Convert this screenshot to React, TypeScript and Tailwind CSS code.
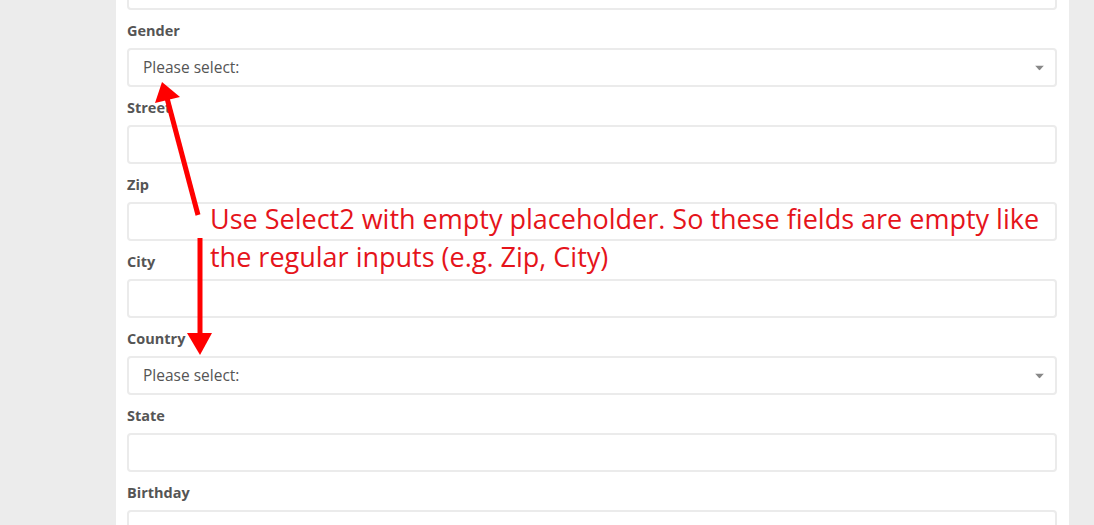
import React from 'react';

type Field = { label: string; select?: boolean };

const fields: Field[] = [
  { label: 'Gender', select: true },
  { label: 'Street' },
  { label: 'Zip' },
  { label: 'City' },
  { label: 'Country', select: true },
  { label: 'State' },
  { label: 'Birthday' },
];

const Caret = () => (
  <svg width="9" height="5" viewBox="0 0 9 5" className="absolute right-[11px] top-1/2 -translate-y-1/2">
    <path d="M0 0 L9 0 L4.5 5 Z" fill="#888" />
  </svg>
);

const Input: React.FC<{ select?: boolean }> = ({ select }) => (
  <div className="relative h-[39px] w-full rounded-[4px] border-2 border-[#ebebeb] bg-white flex items-center">
    {select && (
      <>
        <span className="pl-[14px] text-[15.5px] text-[#555]">Please select:</span>
        <Caret />
      </>
    )}
  </div>
);

const Annotation = () => (
  <div className="pointer-events-none absolute inset-0">
    <svg width="1094" height="525" className="absolute left-0 top-0">
      <line x1="198" y1="215" x2="167" y2="98" stroke="#ff0000" strokeWidth="5" />
      <polygon points="162,82 155,103 180,97" fill="#ff0000" />
      <line x1="200" y1="238" x2="200" y2="336" stroke="#ff0000" strokeWidth="5" />
      <polygon points="187,333 212,333 200,355" fill="#ff0000" />
    </svg>
    <div className="absolute left-[210px] top-[200px] text-[27px] leading-[38px] text-[#e5141b]">
      Use Select2 with empty placeholder. So these fields are empty like
      <br />
      the regular inputs (e.g. Zip, City)
    </div>
  </div>
);

export default function App() {
  return (
    <div
      className="relative h-[525px] w-[1094px] overflow-hidden bg-[#ececec]"
      style={{ fontFamily: '"Open Sans", "Noto Sans", sans-serif' }}
    >
      <div className="ml-[116px] h-full w-[953px] overflow-hidden bg-white pl-[11px] pr-[12px]">
        <div className="-mt-[29px] flex flex-col gap-[11px]">
          <Input />
          {fields.map((f) => (
            <div key={f.label}>
              <div className="mb-[7px] text-[14.5px] font-bold leading-[20px] text-[#555]">{f.label}</div>
              <Input select={f.select} />
            </div>
          ))}
        </div>
      </div>
      <Annotation />
    </div>
  );
}
